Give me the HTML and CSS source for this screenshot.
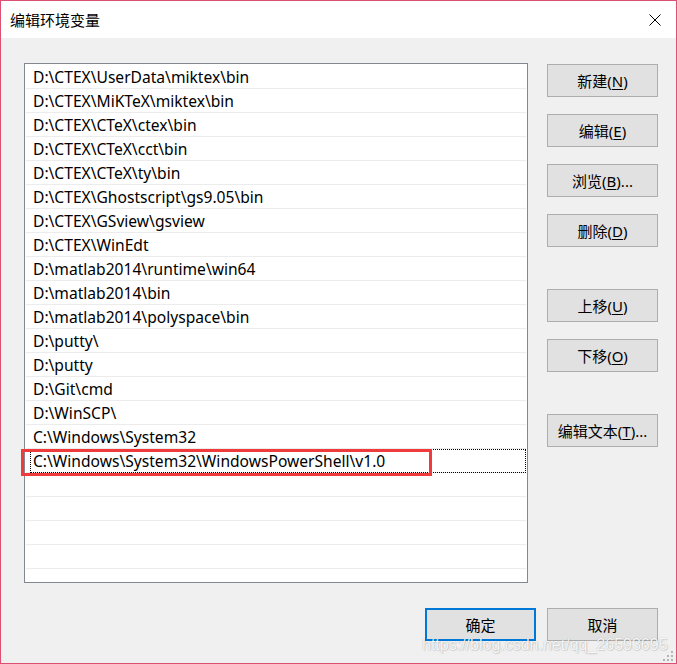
FILE: index.html
```html
<!DOCTYPE html>
<html lang="zh-CN">
<head>
<meta charset="utf-8">
<title>编辑环境变量</title>
<link rel="stylesheet" href="styles.css">
</head>
<body>
<div class="window">
  <div class="titlebar">
    <span class="title">编辑环境变量</span>
    <span class="close">
      <svg width="12" height="12" viewBox="0 0 12 12"><path d="M0.5 0.5 L11.5 11.5 M11.5 0.5 L0.5 11.5" stroke="#000" stroke-width="1" fill="none"/></svg>
    </span>
  </div>
  <div class="content">
    <div class="main">
      <div class="list-wrap">
        <div class="list">
          <div class="row">D:\CTEX\UserData\miktex\bin</div>
          <div class="row">D:\CTEX\MiKTeX\miktex\bin</div>
          <div class="row">D:\CTEX\CTeX\ctex\bin</div>
          <div class="row">D:\CTEX\CTeX\cct\bin</div>
          <div class="row">D:\CTEX\CTeX\ty\bin</div>
          <div class="row">D:\CTEX\Ghostscript\gs9.05\bin</div>
          <div class="row">D:\CTEX\GSview\gsview</div>
          <div class="row">D:\CTEX\WinEdt</div>
          <div class="row">D:\matlab2014\runtime\win64</div>
          <div class="row">D:\matlab2014\bin</div>
          <div class="row">D:\matlab2014\polyspace\bin</div>
          <div class="row">D:\putty\</div>
          <div class="row">D:\putty</div>
          <div class="row">D:\Git\cmd</div>
          <div class="row">D:\WinSCP\</div>
          <div class="row">C:\Windows\System32</div>
          <div class="row focus">C:\Windows\System32\WindowsPowerShell\v1.0</div>
          <div class="row"></div>
          <div class="row"></div>
          <div class="row"></div>
          <div class="row"></div>
          <div class="row"></div>
          <div class="row"></div>
        </div>
        <div class="annot"></div>
      </div>
      <div class="buttons">
        <div class="group">
          <button class="btn">新建(<u>N</u>)</button>
          <button class="btn">编辑(<u>E</u>)</button>
          <button class="btn">浏览(<u>B</u>)...</button>
          <button class="btn">删除(<u>D</u>)</button>
        </div>
        <div class="group">
          <button class="btn">上移(<u>U</u>)</button>
          <button class="btn">下移(<u>O</u>)</button>
        </div>
        <div class="group">
          <button class="btn">编辑文本(<u>T</u>)...</button>
        </div>
      </div>
    </div>
    <div class="footer">
      <button class="btn default">确定</button>
      <button class="btn">取消</button>
    </div>
  </div>
  <div class="watermark">https://blog.csdn.net/qq_26593695</div>
  <svg class="grip" width="12" height="12" viewBox="0 0 12 12">
    <rect x="9" y="1" width="2" height="2" fill="#b4b4b4"/>
    <rect x="5" y="5" width="2" height="2" fill="#b4b4b4"/>
    <rect x="9" y="5" width="2" height="2" fill="#b4b4b4"/>
    <rect x="1" y="9" width="2" height="2" fill="#b4b4b4"/>
    <rect x="5" y="9" width="2" height="2" fill="#b4b4b4"/>
    <rect x="9" y="9" width="2" height="2" fill="#b4b4b4"/>
  </svg>
</div>
</body>
</html>
```
FILE: styles.css
```css
* { box-sizing: border-box; }
html, body { margin: 0; padding: 0; }
body {
  font-family: "Noto Sans", "Noto Sans CJK SC", sans-serif;
  font-size: 15px;
  color: #000;
  background: #f0f0f0;
}
.window {
  position: relative;
  width: 677px;
  height: 664px;
  border: 1px solid #dc5072;
  background: #f0f0f0;
  display: flex;
  flex-direction: column;
  overflow: hidden;
}
.titlebar {
  height: 37px;
  background: #fff;
  display: flex;
  align-items: center;
  justify-content: space-between;
  padding: 0 15px 0 9px;
  flex: none;
}
.title {
  font-family: "Noto Sans CJK SC", sans-serif;
  font-size: 15px;
  line-height: 20px;
  padding-top: 1px;
}
.close { display: flex; padding-top: 1px; }
.content {
  padding: 25px 18px 0 23px;
  display: flex;
  flex-direction: column;
}
.main {
  display: flex;
  gap: 19px;
}
.list-wrap {
  position: relative;
  width: 504px;
  height: 520px;
  flex: none;
}
.list {
  width: 100%;
  height: 100%;
  background: #fff;
  border: 1px solid #828790;
  overflow: hidden;
  padding: 0 1px;
}
.row {
  position: relative;
  height: 24px;
  border-bottom: 1px solid #ececec;
  padding-left: 7px;
  line-height: 24px;
  font-size: 15.6px;
  white-space: nowrap;
}
.row:first-child { height: 25px; padding-top: 1px; }
.focus::before {
  content: "";
  position: absolute;
  left: 4px;
  right: 0;
  top: 0;
  bottom: -1px;
  border: 1px dotted #000;
}
.annot {
  position: absolute;
  left: -3px;
  top: 386px;
  width: 411px;
  height: 27px;
  border: 3px solid #ef3b3b;
}
.buttons {
  display: flex;
  flex-direction: column;
  gap: 42px;
  padding-top: 1px;
}
.group {
  display: flex;
  flex-direction: column;
  gap: 17px;
}
.btn {
  width: 111px;
  height: 33px;
  background: #e1e1e1;
  border: 1px solid #adadad;
  font-family: "Noto Sans", "Noto Sans CJK SC", sans-serif;
  font-size: 15px;
  color: #000;
  padding: 0;
  margin: 0;
  line-height: 20px;
}
.btn u { text-underline-offset: 2px; }
.btn.default { border: 2px solid #0078d7; }
.footer {
  margin-top: 25px;
  display: flex;
  justify-content: flex-end;
  gap: 11px;
}
.watermark {
  position: absolute;
  left: 421px;
  top: 635px;
  font-family: "Liberation Sans", Arial, sans-serif;
  font-size: 16px;
  line-height: 18px;
  color: rgba(255, 255, 255, 0.92);
  text-shadow: 0 0 1px rgba(0, 0, 0, 0.3), 1px 1px 1px rgba(0, 0, 0, 0.1);
  white-space: nowrap;
}
.grip {
  position: absolute;
  right: 2px;
  bottom: 1px;
}
```
